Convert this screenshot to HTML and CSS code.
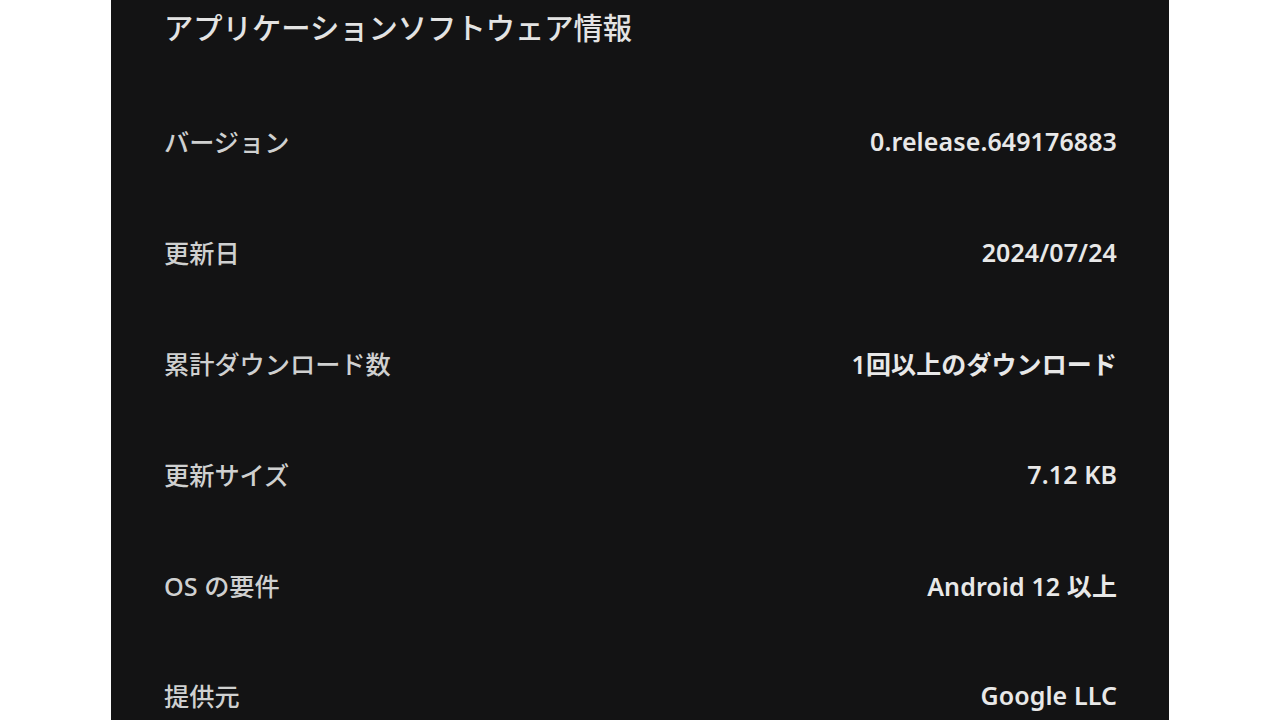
FILE: index.html
```html
<!DOCTYPE html>
<html lang="ja">
<head>
<meta charset="utf-8">
<link rel="stylesheet" href="styles.css">
</head>
<body>
<div class="panel">
  <h1 class="title">アプリケーションソフトウェア情報</h1>
  <div class="rows">
    <div class="row"><span class="label">バージョン</span><span class="value">0.release.649176883</span></div>
    <div class="row"><span class="label">更新日</span><span class="value">2024/07/24</span></div>
    <div class="row"><span class="label">累計ダウンロード数</span><span class="value">1回以上のダウンロード</span></div>
    <div class="row"><span class="label">更新サイズ</span><span class="value">7.12 KB</span></div>
    <div class="row"><span class="label">OS の要件</span><span class="value">Android 12 以上</span></div>
    <div class="row"><span class="label">提供元</span><span class="value">Google LLC</span></div>
  </div>
</div>
</body>
</html>
```

FILE: styles.css
```css
html, body {
  margin: 0;
  padding: 0;
  background: #ffffff;
}
body {
  width: 1280px;
  height: 720px;
  overflow: hidden;
  font-family: "Noto Sans", "Noto Sans CJK JP", sans-serif;
}
.panel {
  margin: 0 111px;
  width: 1058px;
  height: 720px;
  box-sizing: border-box;
  padding: 0 52px 0 53px;
  background: #131314;
  overflow: hidden;
}
.title {
  margin: 0;
  height: 56px;
  line-height: 56px;
  font-size: 29.3px;
  font-weight: 500;
  color: #e3e3e3;
  letter-spacing: 0;
}
.rows {
  padding-top: 30px;
  display: flex;
  flex-direction: column;
}
.row {
  height: 110.8px;
  display: flex;
  align-items: center;
  justify-content: space-between;
}
.label {
  font-size: 25.2px;
  font-weight: 500;
  color: #cfd0d0;
}
.value {
  font-size: 25px;
  font-weight: 600;
  color: #e8e8e8;
  letter-spacing: 0.1px;
}
```
